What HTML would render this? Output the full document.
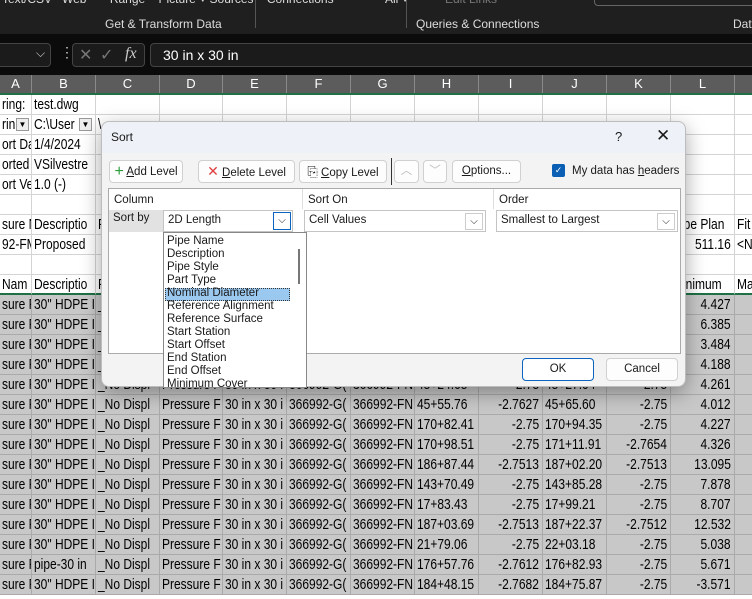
<!DOCTYPE html>
<html><head><meta charset="utf-8"><style>
*{box-sizing:border-box;margin:0;padding:0}
body{width:752px;height:599px;overflow:hidden;background:#fff;font-family:"Liberation Sans",sans-serif;position:relative}
.abs{position:absolute}
#rib{left:0;top:0;width:752px;height:34px;background:#1f1f1f;color:#ddd;font-size:12px}
#fb{left:0;top:34px;width:752px;height:41px;background:#0b0b0b}
.box{position:absolute;border:1px solid #444;border-radius:4px;background:#1b1b1b}
#hdr{left:0;top:75px;width:752px;height:20px;background:#5c5c5c;border-bottom:2px solid #1e7145}
.hc{position:absolute;top:0;height:18px;border-right:1px solid #8a8a8a;color:#fff;font-size:13px;text-align:center;line-height:18px}
.c{position:absolute;height:20px;border-right:1px solid #d4d4d4;border-bottom:1px solid #d4d4d4;font-size:15px;line-height:19px;overflow:hidden;white-space:nowrap;padding-left:2px;color:#000}
.c span{display:inline-block;transform:scaleX(.8);transform-origin:0 50%}
.c.r span{transform-origin:100% 50%}
.g{background:#c8c8c8;border-color:#aaa}
.r{text-align:right;padding-right:3px;padding-left:0}
#dlg{left:101px;top:121px;width:585px;height:266px;background:#f3f3f3;border:1px solid #bdbdbd;border-radius:8px;box-shadow:0 6px 20px rgba(0,0,0,.35);font-family:"Liberation Sans",sans-serif;font-size:11.5px;color:#1a1a1a;overflow:visible}
.btn{position:absolute;height:23px;background:#fdfdfd;border:1px solid #d0d0d0;border-radius:4px;line-height:21px;text-align:center}
.cb{position:absolute;height:22px;background:#fff;border:1px solid #c4c4c4}
.dd{position:absolute;top:2px;right:2px;width:18px;height:17px;border:1px solid #ccc;background:#fff}
u{text-decoration:underline}
.li{position:absolute;left:3px;height:13px;line-height:13px;font-size:11.5px}
</style></head><body>
<div id="rib" class="abs">
<div class="abs" style="left:2px;top:-8px;white-space:nowrap">Text/CSV &nbsp; Web &nbsp;&nbsp;&nbsp;&nbsp;&nbsp; Range &nbsp;&nbsp; Picture ˅ Sources &nbsp;&nbsp; Connections</div>
<div class="abs" style="left:385px;top:-8px">All ˅</div>
<div class="abs" style="top:-8px;color:#777;left:445px">Edit Links</div>
<div class="abs" style="left:105px;top:17px">Get &amp; Transform Data</div>
<div class="abs" style="left:416px;top:17px">Queries &amp; Connections</div>
<div class="abs" style="left:733px;top:17px">Dat</div>
<div class="abs" style="left:255px;top:0;width:1px;height:28px;background:#555"></div>
<div class="abs" style="left:406px;top:0;width:1px;height:28px;background:#555"></div>
<div class="abs" style="left:594px;top:-10px;width:170px;height:16px;border:1px solid #666;border-radius:4px"></div>
</div>
<div id="fb" class="abs">
<div class="box" style="left:-5px;top:9px;width:56px;height:24px"><span class="abs" style="left:40px;top:2px;color:#ccc;font-size:12px">⌵</span></div>
<div class="abs" style="left:60px;top:10px;color:#ccc;font-size:14px">⋮</div>
<div class="box" style="left:72px;top:9px;width:73px;height:24px;color:#777;font-size:16px"><span class="abs" style="left:6px;top:1px">✕</span><span class="abs" style="left:27px;top:1px">✓</span><span class="abs" style="left:52px;top:1px;color:#ccc;font-family:'Liberation Serif',serif;font-style:italic">fx</span></div>
<div class="box" style="left:150px;top:9px;width:610px;height:24px;color:#fff;font-size:14px;line-height:22px;padding-left:12px">30 in x 30 in</div>
</div>
<div id="hdr" class="abs">
<div class="hc" style="left:0;width:32px">A</div><div class="hc" style="left:32px;width:64px">B</div><div class="hc" style="left:96px;width:64px">C</div><div class="hc" style="left:160px;width:63px">D</div><div class="hc" style="left:223px;width:64px">E</div><div class="hc" style="left:287px;width:64px">F</div><div class="hc" style="left:351px;width:64px">G</div><div class="hc" style="left:415px;width:64px">H</div><div class="hc" style="left:479px;width:64px">I</div><div class="hc" style="left:543px;width:64px">J</div><div class="hc" style="left:607px;width:64px">K</div><div class="hc" style="left:671px;width:64px">L</div><div class="hc" style="left:735px;width:20px"></div>
</div>
<div id="grid"></div>
<script>
(function(){
var X=[0,32,96,160,223,287,351,415,479,543,607,671,735,770];
var T=[
["ring:","test.dwg"],["rin","C:\\User","\\"],["ort Da"," 1/4/2024"],["orted","VSilvestre"],["ort Ve","1.0 (-)"],[],
["sure N","Descriptio","P","","","","","","","","","Pipe Plan","Fit"],
["92-FM","Proposed","","","","","","","","","","@511.16","<N"],[],
[" Nam","Descriptio","P","","","","","","","","","Minimum","Ma"]];
var L=["4.427","6.385","3.484","4.188","4.261","4.012","4.227","4.326","13.095","7.878","8.707","12.532","5.038","5.671","-3.571"];
var H=["45+10.22","45+15.40","45+18.11","45+21.30","45+24.65","45+55.76","170+82.41","170+98.51","186+87.44","143+70.49","17+83.43","187+03.69","21+79.06","176+57.76","184+48.15"];
var I=["-2.75","-2.75","-2.75","-2.75","-2.75","-2.7627","-2.75","-2.75","-2.7513","-2.75","-2.75","-2.7513","-2.75","-2.7612","-2.7682"];
var J=["45+14.80","45+17.92","45+20.13","45+24.02","45+27.04","45+65.60","170+94.35","171+11.91","187+02.20","143+85.28","17+99.21","187+22.37","22+03.18","176+82.93","184+75.87"];
var K=["-2.75","-2.75","-2.75","-2.75","-2.75","-2.75","-2.75","-2.7654","-2.7513","-2.75","-2.75","-2.7512","-2.75","-2.75","-2.75"];
var h="";
for(var r=0;r<25;r++){var y=95+r*20;var g=r>=10;
for(var c=0;c<13;c++){var t="",cl="c"+(g?" g":"");
if(!g){var row=T[r]||[];t=row[c]||"";if(t[0]=="@"){t=t.slice(1);cl+=" r";}}
else{var k=r-10;var d=["sure F",k==13?"pipe-30 in":"30\" HDPE I","_No Displ","Pressure F","30 in x 30 i","366992-G(","366992-FN",H[k],I[k],J[k],K[k],L[k],""];t=d[c];if(c==8||c==10||c==11)cl+=" r";}
var st="left:"+X[c]+"px;top:"+y+"px;width:"+(X[c+1]-X[c])+"px;";
if(r==9)st+="border-bottom:2px solid #1e7145;";
h+='<div class="'+cl+'" style="'+st+'"><span>'+t.replace(/</g,"&lt;")+'</span></div>';}}
h+='<div class="abs" style="left:16px;top:118px;width:13px;height:13px;border:1px solid #999;background:#eee;font-size:8px;text-align:center;line-height:11px">▼</div>';
h+='<div class="abs" style="left:79px;top:118px;width:13px;height:13px;border:1px solid #999;background:#eee;font-size:8px;text-align:center;line-height:11px">▼</div>';
document.getElementById("grid").innerHTML=h;
})();
</script>
<div id="dlg" class="abs">
<div class="abs" style="left:0;top:0;width:583px;height:31px;background:#eef2f8;border-radius:8px 8px 0 0"></div>
<div class="abs" style="left:9px;top:8px;font-size:12px">Sort</div>
<div class="abs" style="left:513px;top:7px;font-size:13px">?</div>
<div class="abs" style="left:554px;top:4px;font-size:17px">✕</div>
<div class="btn" style="left:7px;top:38px;width:74px"><span style="color:#2a9d3a;font-size:16px;vertical-align:-1px">+</span> <u>A</u>dd Level</div>
<div class="btn" style="left:96px;top:38px;width:97px"><span style="color:#e04040;font-size:14px">✕</span> <u>D</u>elete Level</div>
<div class="btn" style="left:197px;top:38px;width:88px"><span style="font-size:13px">⎘</span> <u>C</u>opy Level</div>
<div class="abs" style="left:289px;top:36px;width:1px;height:27px;background:#333"></div>
<div class="btn" style="left:292px;top:38px;width:25px;color:#bbb">︿</div>
<div class="btn" style="left:321px;top:38px;width:24px;color:#bbb">﹀</div>
<div class="btn" style="left:350px;top:38px;width:69px"><u>O</u>ptions...</div>
<div class="abs" style="left:450px;top:42px;width:13px;height:13px;background:#0a5fb4;border-radius:2px;color:#fff;font-size:9px;text-align:center;line-height:13px">✓</div>
<div class="abs" style="left:470px;top:43px">My data has <u>h</u>eaders</div>
<div class="abs" style="left:6px;top:66px;width:573px;height:166px;background:#fff;border:1px solid #aaa"></div>
<div class="abs" style="left:12px;top:72px">Column</div>
<div class="abs" style="left:200px;top:67px;width:1px;height:20px;background:#ddd"></div>
<div class="abs" style="left:206px;top:72px">Sort On</div>
<div class="abs" style="left:391px;top:67px;width:1px;height:20px;background:#ddd"></div>
<div class="abs" style="left:397px;top:72px">Order</div>
<div class="abs" style="left:7px;top:88px;width:54px;height:22px;background:#e2e2e2"></div>
<div class="abs" style="left:11px;top:90px">Sort by</div>
<div class="cb" style="left:61px;top:88px;width:130px"><span class="abs" style="left:4px;top:3px">2D Length</span><div class="dd" style="border-color:#0a64c0;height:18px;top:1px;right:1px;text-align:center;font-size:10px;line-height:16px">⌵</div></div>
<div class="cb" style="left:202px;top:88px;width:182px"><span class="abs" style="left:4px;top:3px">Cell Values</span><div class="dd" style="text-align:center;font-size:10px;line-height:15px">⌵</div></div>
<div class="cb" style="left:394px;top:88px;width:182px"><span class="abs" style="left:4px;top:3px">Smallest to Largest</span><div class="dd" style="text-align:center;font-size:10px;line-height:15px">⌵</div></div>
<div class="btn" style="left:420px;top:236px;width:72px;border:1px solid #0a64c0;background:#fff">OK</div>
<div class="btn" style="left:504px;top:236px;width:72px">Cancel</div>
<div class="abs" style="left:61px;top:110px;width:144px;height:156px;background:#fff;border:1px solid #888;overflow:hidden">
<div class="abs" style="left:1px;top:55px;width:125px;height:13px;background:#9bc8ef;border:1px dotted #333"></div>
<div class="abs" style="left:134px;top:16px;width:2px;height:35px;background:#777"></div>
<div class="li" style="top:2px">Pipe Name</div><div class="li" style="top:15px">Description</div><div class="li" style="top:28px">Pipe Style</div><div class="li" style="top:41px">Part Type</div><div class="li" style="top:54px">Nominal Diameter</div><div class="li" style="top:67px">Reference Alignment</div><div class="li" style="top:80px">Reference Surface</div><div class="li" style="top:93px">Start Station</div><div class="li" style="top:106px">Start Offset</div><div class="li" style="top:119px">End Station</div><div class="li" style="top:132px">End Offset</div><div class="li" style="top:145px">Minimum Cover</div>
</div>
</div>
</body></html>
